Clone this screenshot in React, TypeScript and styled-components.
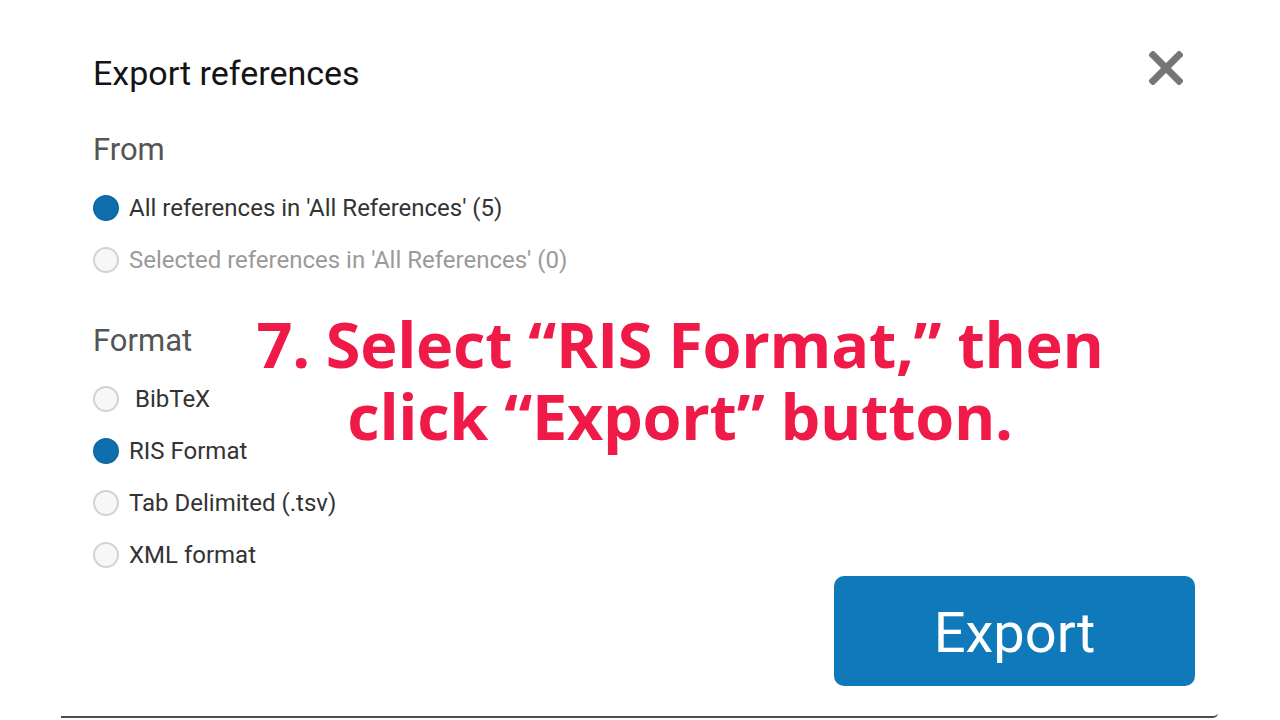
import styled, { createGlobalStyle } from 'styled-components';

const GlobalStyle = createGlobalStyle`
  html, body {
    margin: 0;
    padding: 0;
    background: #ffffff;
  }
  body {
    width: 1280px;
    height: 720px;
    overflow: hidden;
    font-family: Roboto, "Liberation Sans", Arial, sans-serif;
  }
`;

const Stage = styled.div`
  position: relative;
  width: 1280px;
  height: 720px;
`;

const Dialog = styled.div`
  box-sizing: border-box;
  margin-left: 61px;
  width: 1157px;
  height: 718px;
  padding: 53px 23px 30px 32px;
  display: flex;
  flex-direction: column;
  background: #fff;
  border-bottom: 2px solid #4d4d4d;
  border-bottom-right-radius: 5px;
`;

const Header = styled.div`
  display: flex;
  justify-content: space-between;
  align-items: center;
  height: 40px;
`;

const Title = styled.h2`
  margin: 0;
  font-size: 34px;
  font-weight: 400;
  line-height: 40px;
  color: #141414;
`;

const CloseButton = styled.button`
  border: 0;
  background: none;
  padding: 0;
  margin-right: 12px;
  margin-top: -10px;
  width: 34px;
  height: 34px;
  display: flex;
`;

const Body = styled.div`
  flex: 1;
  display: flex;
  justify-content: space-between;
  align-items: flex-end;
`;

const Options = styled.div`
  display: flex;
  flex-direction: column;
  padding-bottom: 105px;
`;

const SectionLabel = styled.div<{ $top: number }>`
  margin-top: ${p => p.$top}px;
  margin-bottom: 15px;
  font-size: 31px;
  line-height: 34px;
  color: #555;
`;

const Row = styled.label<{ $muted?: boolean }>`
  display: flex;
  align-items: center;
  gap: 10px;
  height: 52px;
  font-size: 24px;
  color: ${p => (p.$muted ? '#9a9a9a' : '#333')};
  white-space: pre;
`;

const Dot = styled.span<{ $on?: boolean }>`
  box-sizing: border-box;
  width: 26px;
  height: 26px;
  border-radius: 50%;
  flex: none;
  background: ${p => (p.$on ? '#0e6fac' : '#f7f7f7')};
  border: 2px solid ${p => (p.$on ? '#0f6aa4' : '#d3d3d3')};
`;

const ExportButton = styled.button`
  width: 361px;
  height: 110px;
  border: 0;
  border-radius: 10px;
  background: #0f79b9;
  color: #fff;
  font-family: Roboto, "Liberation Sans", Arial, sans-serif;
  font-size: 56px;
  line-height: 1;
  padding-top: 4px;
`;

const Caption = styled.div`
  position: absolute;
  left: 240px;
  top: 308px;
  width: 880px;
  text-align: center;
  font-family: "Open Sans", "Liberation Sans", sans-serif;
  font-weight: 700;
  font-size: 63px;
  line-height: 72px;
  color: #f01a48;
  letter-spacing: -0.3px;
`;

function CloseIcon() {
  return (
    <svg width="34" height="34" viewBox="0 0 34 34">
      <path d="M4 4 L30 30 M30 4 L4 30" stroke="#767676" strokeWidth="7" strokeLinecap="square" />
    </svg>
  );
}

const fromOptions = [
  { label: "All references in 'All References' (5)", on: true },
  { label: "Selected references in 'All References' (0)", muted: true },
];

const formatOptions = [
  { label: ' BibTeX' },
  { label: 'RIS Format', on: true },
  { label: 'Tab Delimited (.tsv)' },
  { label: 'XML format' },
];

export default function App() {
  return (
    <Stage>
      <GlobalStyle />
      <Dialog>
        <Header>
          <Title>Export references</Title>
          <CloseButton aria-label="Close">
            <CloseIcon />
          </CloseButton>
        </Header>
        <Body>
          <Options>
            <SectionLabel $top={39}>From</SectionLabel>
            {fromOptions.map(o => (
              <Row key={o.label} $muted={o.muted}>
                <Dot $on={o.on} />
                {o.label}
              </Row>
            ))}
            <SectionLabel $top={38}>Format</SectionLabel>
            {formatOptions.map(o => (
              <Row key={o.label}>
                <Dot $on={o.on} />
                {o.label}
              </Row>
            ))}
          </Options>
          <ExportButton>Export</ExportButton>
        </Body>
      </Dialog>
      <Caption>
        7. Select “RIS Format,” then
        <br />
        click “Export” button.
      </Caption>
    </Stage>
  );
}
